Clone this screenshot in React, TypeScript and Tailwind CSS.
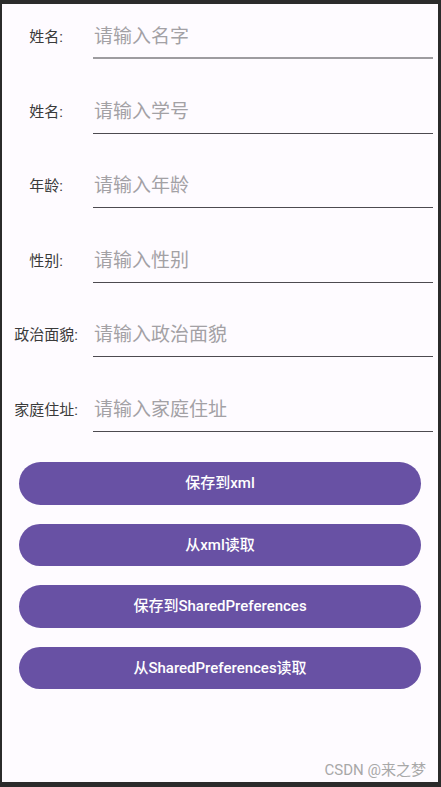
const fields = [
  { label: "姓名:", hint: "请输入名字", focused: true },
  { label: "姓名:", hint: "请输入学号" },
  { label: "年龄:", hint: "请输入年龄" },
  { label: "性别:", hint: "请输入性别" },
  { label: "政治面貌:", hint: "请输入政治面貌" },
  { label: "家庭住址:", hint: "请输入家庭住址" },
];

const actions = ["保存到xml", "从xml读取", "保存到SharedPreferences", "从SharedPreferences读取"];

const App = () => {
  return (
    <div
      className="h-[787px] w-[441px] bg-[#2b2b2b] pt-[4px] pl-[2px] pr-[3px] pb-[5px]"
      style={{ fontFamily: 'Roboto, "Noto Sans CJK SC", sans-serif' }}
    >
      <div className="relative h-full w-full bg-[#fefbff]">
        {/* Form rows */}
        <div className="flex flex-col">
          {fields.map((f, i) => (
            <div key={i} className="flex h-[74.5px] items-start">
              <div className="w-[88px] pt-[23px] text-center text-[15px] leading-[20px] text-[#3a3a3a]">{f.label}</div>
              <div
                className={`ml-[3px] h-[55px] w-[340px] pt-[21px] pl-[1px] text-[19px] leading-[24px] text-[#a3a1a5] ${
                  f.focused ? "border-b-2 border-[#9e9ca0]" : "border-b-[1.5px] border-[#4d4a50]"
                }`}
              >
                {f.hint}
              </div>
            </div>
          ))}
        </div>

        {/* Buttons */}
        <div className="mt-[11px] flex flex-col gap-[19px] px-[17px]">
          {actions.map((a) => (
            <button
              key={a}
              className="h-[42.5px] w-[402px] rounded-full bg-[#6851a4] text-[15px] font-medium text-white"
            >
              {a}
            </button>
          ))}
        </div>

        <div className="absolute bottom-[2px] right-[12px] text-[15px] leading-[20px] text-[#a8a8a8]">
          CSDN @来之梦
        </div>
      </div>
    </div>
  );
};

export default App;
